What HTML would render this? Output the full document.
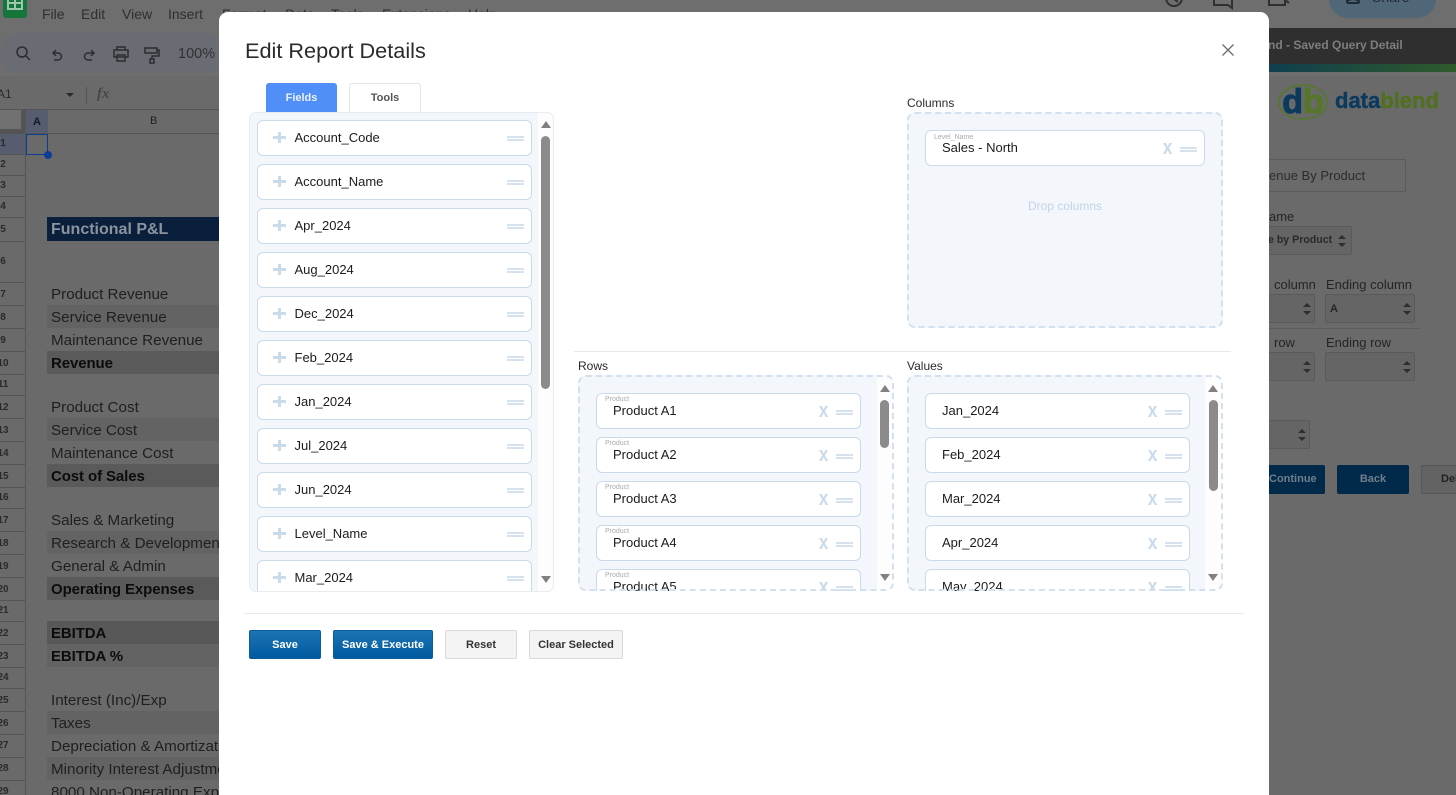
<!DOCTYPE html>
<html lang="en"><head><meta charset="utf-8"><title>Edit Report Details</title>
<style>
html,body{margin:0;padding:0;width:1456px;height:795px;overflow:hidden}
body{background:#6a6a6a;font-family:"Liberation Sans",sans-serif;color:#222}
#w{position:relative;width:1456px;height:795px;overflow:hidden;background:#6a6a6a}
.a{position:absolute;white-space:nowrap}
.m{font-size:14px;color:#2d2f31;top:6px}
.lbl{font-size:15.2px;color:#1f1f1f;left:51px}
.b{font-weight:700;color:#0c0c0c;font-size:15px;letter-spacing:-.1px}
.bar{left:47px;width:172px;background:#5a5a5a}
.rn{left:-9px;width:24px;text-align:center;font-size:10px;color:#2a2a2a;height:14px;line-height:14px;font-weight:700}
.ln{left:0;width:26px;height:1px;background:#555}
.modal{left:219px;top:12px;width:1050px;height:783px;background:#fff;border-radius:9px 9px 0 0}
.box{position:absolute;box-sizing:border-box;background:#f3f7fb;overflow:hidden}
.dash{position:absolute;box-sizing:border-box;border:2px dashed #d3e1ee;border-radius:8px;pointer-events:none}
.it{position:absolute;box-sizing:border-box;height:36px;background:#fff;border:1px solid #c9daea;border-radius:6px}
.t{position:absolute;font-size:13px;line-height:16px;color:#1c1c1c;top:9px;white-space:nowrap}
.f .t{left:36.5px}
.s{position:absolute;left:8px;top:1px;font-size:7px;line-height:9px;color:#aaa}
.v .t{left:16px;top:9px}
.p{position:absolute;left:15px;top:11px;width:13px;height:11px}
.p:before{content:"";position:absolute;left:5px;top:0;width:3px;height:11px;background:#c9daea}
.p:after{content:"";position:absolute;left:0;top:4px;width:13px;height:3px;background:#c9daea}
.g{position:absolute;right:7px;top:15px;width:17px;height:1px;border-top:2px solid #d5e2ee;border-bottom:2px solid #d5e2ee;box-sizing:content-box}
.v .g{top:16px}
.x{position:absolute;right:30.5px;top:8px;font-size:20px;line-height:18px;color:#c9daea;font-weight:700;transform:scaleX(.85)}
.sb{position:absolute;background:#fdfdfe}
.th{position:absolute;background:#8b8b8b;border-radius:5px;width:9px}
.up{position:absolute;width:0;height:0;border-left:5px solid transparent;border-right:5px solid transparent;border-bottom:7px solid #808080}
.dn{position:absolute;width:0;height:0;border-left:5px solid transparent;border-right:5px solid transparent;border-top:7px solid #808080}
.hd{position:absolute;font-size:12px;line-height:14px;color:#2a2a2a}
.btn{position:absolute;box-sizing:border-box;top:630px;height:29px;border-radius:2px;font-size:11px;font-weight:700;text-align:center;line-height:28px}
.bl{background:linear-gradient(#1b74b3,#005a9f);color:#fff;border:1px solid #0a5d9c}
.gr{background:#f4f4f4;color:#333;border:1px solid #d9d9d9}
.dk{position:absolute;font-size:13px;color:#252525;white-space:nowrap}
.sel{position:absolute;box-sizing:border-box;background:#656565;border:1px solid #5a5a5a;border-radius:2px}
.ar{position:absolute;width:0;height:0;border-left:4px solid transparent;border-right:4px solid transparent;border-bottom:4px solid #2e2e2e}
.ar:after{content:"";position:absolute;left:-4px;top:8px;width:0;height:0;border-left:4px solid transparent;border-right:4px solid transparent;border-top:4px solid #2e2e2e}
</style></head><body><div id="w">

<!-- top toolbar -->
<div class="a" style="left:0;top:0;width:1456px;height:76px;background:#6e6e6e"></div>
<div class="a" style="left:3px;top:-6px;width:24px;height:24px;background:#14763a;border-radius:3px"></div>
<svg class="a" style="left:6px;top:-4px" width="18" height="16"><path d="M2 2H16V13H2ZM2 7H16M9 2V13" stroke="#9fc5ad" stroke-width="2" fill="none"/></svg>
<div class="a m" style="left:42px">File</div><div class="a m" style="left:81px">Edit</div><div class="a m" style="left:122px">View</div><div class="a m" style="left:168px">Insert</div><div class="a m" style="left:222px">Format</div><div class="a m" style="left:285px">Data</div><div class="a m" style="left:331px">Tools</div><div class="a m" style="left:382px">Extensions</div><div class="a m" style="left:468px">Help</div>
<div class="a" style="left:0;top:33px;width:225px;height:40px;background:#696c73;border-radius:20px"></div>
<svg class="a" style="left:0;top:30px" width="225" height="50" fill="none" stroke="#2b2d30" stroke-width="1.5">
<circle cx="22" cy="22" r="5"/><path d="M26 26L30 30"/>
<path d="M56 20L53 23L56 26M53 23H58A3.5 3.5 0 0 1 58 30H54"/>
<path d="M91 20L94 23L91 26M94 23H88A3.5 3.5 0 0 0 88 30H92"/>
<path d="M114 27H128V20H114ZM117 20V17H125V20M117 25H125V31H117Z"/>
<path d="M145 18H157V23H145ZM157 20H159V26H152V29M150 29H154V33H150Z"/>
</svg>
<div class="a" style="left:178px;top:46px;font-size:14.5px;color:#303133">100%</div>
<svg class="a" style="left:1160px;top:-10px" width="130" height="30" fill="none" stroke="#2f3033" stroke-width="2"><circle cx="14" cy="8" r="8"/><path d="M14 4V9L18 12"/><path d="M54 2V15H68L72 18V2Z"/><path d="M109 2V15H125V10L129 13M125 15"/></svg>
<div class="a" style="left:1329px;top:-20px;width:107px;height:38px;background:#4f6778;border-radius:19px"></div>
<svg class="a" style="left:1346px;top:-6px" width="16" height="12" fill="none" stroke="#1d2933" stroke-width="2"><path d="M1 9H13M1 9V7Q7 3 13 7V9"/></svg>
<div class="a" style="left:1372px;top:-11px;font-size:14px;color:#1d2933">Share</div>

<!-- formula bar -->
<div class="a" style="left:0;top:76px;width:225px;height:34px;background:#6a6a6a"></div>
<div class="a" style="left:-3px;top:87px;font-size:12px;color:#2a2a2a">A1</div>
<div class="a" style="left:66px;top:93px;border-left:4px solid transparent;border-right:4px solid transparent;border-top:4px solid #2a2a2a"></div>
<div class="a" style="left:86px;top:87px;width:1px;height:17px;background:#555"></div>
<div class="a" style="left:97px;top:86px;font-family:'Liberation Serif',serif;font-style:italic;font-weight:700;font-size:15px;color:#474747">fx</div>
<div class="a" style="left:0;top:109px;width:225px;height:1px;background:#555"></div>

<!-- grid headers -->
<div class="a" style="left:0;top:110px;width:225px;height:24px;background:#6a6a6a"></div>
<div class="a" style="left:0;top:110px;width:21px;height:19px;background:#717171"></div>
<div class="a" style="left:21px;top:110px;width:5px;height:24px;background:#545454"></div>
<div class="a" style="left:0;top:129px;width:26px;height:5px;background:#545454"></div>
<div class="a" style="left:26px;top:110px;width:22px;height:24px;background:#565d6e;text-align:center;line-height:24px;font-size:11px;font-weight:700;color:#111b2c">A</div>
<div class="a" style="left:150px;top:115px;font-size:11px;color:#222">B</div>
<div class="a" style="left:26px;top:133px;width:199px;height:1px;background:#555"></div>
<div class="a" style="left:25px;top:110px;width:1px;height:685px;background:#555"></div>
<div class="a" style="left:0;top:134px;width:25px;height:20px;background:#565d6e"></div>
<div class="a" style="left:26px;top:134px;width:22px;height:21px;box-sizing:border-box;border:1px solid #0c3f94"></div>
<div class="a" style="left:44px;top:151px;width:8px;height:8px;border-radius:50%;background:#0c3f94"></div>

<div class="a rn" style="top:137px">1</div><div class="a ln" style="top:154px"></div>
<div class="a rn" style="top:158px">2</div><div class="a ln" style="top:175px"></div>
<div class="a rn" style="top:179px">3</div><div class="a ln" style="top:196px"></div>
<div class="a rn" style="top:200px">4</div><div class="a ln" style="top:217px"></div>
<div class="a rn" style="top:223px">5</div><div class="a ln" style="top:241px"></div>
<div class="a rn" style="top:255px">6</div><div class="a ln" style="top:282px"></div>
<div class="a rn" style="top:288px">7</div><div class="a ln" style="top:305px"></div>
<div class="a rn" style="top:311px">8</div><div class="a ln" style="top:328px"></div>
<div class="a rn" style="top:334px">9</div><div class="a ln" style="top:351px"></div>
<div class="a rn" style="top:357px">10</div><div class="a ln" style="top:374px"></div>
<div class="a rn" style="top:378px">11</div><div class="a ln" style="top:395px"></div>
<div class="a rn" style="top:401px">12</div><div class="a ln" style="top:418px"></div>
<div class="a rn" style="top:424px">13</div><div class="a ln" style="top:441px"></div>
<div class="a rn" style="top:447px">14</div><div class="a ln" style="top:464px"></div>
<div class="a rn" style="top:470px">15</div><div class="a ln" style="top:487px"></div>
<div class="a rn" style="top:491px">16</div><div class="a ln" style="top:508px"></div>
<div class="a rn" style="top:514px">17</div><div class="a ln" style="top:531px"></div>
<div class="a rn" style="top:537px">18</div><div class="a ln" style="top:554px"></div>
<div class="a rn" style="top:560px">19</div><div class="a ln" style="top:577px"></div>
<div class="a rn" style="top:583px">20</div><div class="a ln" style="top:600px"></div>
<div class="a rn" style="top:604px">21</div><div class="a ln" style="top:621px"></div>
<div class="a rn" style="top:627px">22</div><div class="a ln" style="top:644px"></div>
<div class="a rn" style="top:650px">23</div><div class="a ln" style="top:667px"></div>
<div class="a rn" style="top:671px">24</div><div class="a ln" style="top:688px"></div>
<div class="a rn" style="top:694px">25</div><div class="a ln" style="top:711px"></div>
<div class="a rn" style="top:717px">26</div><div class="a ln" style="top:734px"></div>
<div class="a rn" style="top:739px">27</div><div class="a ln" style="top:757px"></div>
<div class="a rn" style="top:762px">28</div><div class="a ln" style="top:780px"></div>
<div class="a rn" style="top:785px">29</div>

<!-- sheet bands -->
<div class="a" style="left:47px;top:217px;width:172px;height:24px;background:#0a1f3b"></div>
<div class="a" style="left:51px;top:221px;font-size:16px;font-weight:700;color:#8b939d">Functional P&amp;L</div>
<div class="a bar" style="top:305px;height:23px;background:#636363"></div>
<div class="a bar" style="top:351px;height:23px"></div>
<div class="a bar" style="top:418px;height:23px;background:#636363"></div>
<div class="a bar" style="top:464px;height:23px"></div>
<div class="a bar" style="top:531px;height:23px;background:#636363"></div>
<div class="a bar" style="top:577px;height:23px"></div>
<div class="a bar" style="top:621px;height:23px;background:#585858"></div>
<div class="a bar" style="top:644px;height:23px;background:#636363"></div>
<div class="a bar" style="top:711px;height:23px;background:#636363"></div>
<div class="a bar" style="top:757px;height:23px;background:#636363"></div>
<div class="a lbl" style="top:286px">Product Revenue</div>
<div class="a lbl" style="top:309px">Service Revenue</div>
<div class="a lbl" style="top:332px">Maintenance Revenue</div>
<div class="a lbl b" style="top:355px">Revenue</div>
<div class="a lbl" style="top:399px">Product Cost</div>
<div class="a lbl" style="top:422px">Service Cost</div>
<div class="a lbl" style="top:445px">Maintenance Cost</div>
<div class="a lbl b" style="top:468px">Cost of Sales</div>
<div class="a lbl" style="top:512px">Sales &amp; Marketing</div>
<div class="a lbl" style="top:535px">Research &amp; Development</div>
<div class="a lbl" style="top:558px">General &amp; Admin</div>
<div class="a lbl b" style="top:581px">Operating Expenses</div>
<div class="a lbl b" style="top:625px">EBITDA</div>
<div class="a lbl b" style="top:648px">EBITDA %</div>
<div class="a lbl" style="top:692px">Interest (Inc)/Exp</div>
<div class="a lbl" style="top:715px">Taxes</div>
<div class="a lbl" style="top:738px">Depreciation &amp; Amortization</div>
<div class="a lbl" style="top:761px">Minority Interest Adjustment</div>
<div class="a lbl" style="top:784px">8000 Non-Operating Expenses</div>

<!-- right sidebar -->
<div class="a" style="left:1269px;top:28px;width:187px;height:36px;background:#2f2f2f"></div>
<div class="a" style="left:1268px;top:38px;font-size:12px;font-weight:700;color:#7e7e7e">nd - Saved Query Detail</div>
<div class="a" style="left:1269px;top:64px;width:187px;height:8px;background:linear-gradient(90deg,#0f3f4f,#2f5a2a)"></div>
<svg class="a" style="left:1278px;top:84px" width="50" height="36"><ellipse cx="25" cy="18" rx="24" ry="17" fill="none" stroke="#56772a" stroke-width="1.5"/><text x="25" y="29" text-anchor="middle" font-family="Liberation Sans" font-weight="700" font-size="34"><tspan fill="#0b3a5e" stroke="#0b3a5e" stroke-width="1">d</tspan><tspan fill="#56772a" stroke="#56772a" stroke-width="1">b</tspan></text></svg>
<div class="a" style="left:1335px;top:88px;font-size:22px;font-weight:700;color:#0b3a5e;-webkit-text-stroke:.4px #0b3a5e">data<span style="color:#507020;-webkit-text-stroke:.4px #507020">blend</span></div>
<div class="sel" style="left:1240px;top:159px;width:166px;height:33px;background:#6a6a6a"></div>
<div class="dk" style="left:1269px;top:168px;color:#2c2c2c">enue By Product</div>
<div class="dk" style="left:1269px;top:209px">ame</div>
<div class="sel" style="left:1240px;top:226px;width:112px;height:29px"></div>
<div class="dk" style="left:1268px;top:234px;font-size:10.6px;font-weight:700;color:#2a2a2a">e by Product</div>
<div class="ar" style="left:1338px;top:235px"></div>
<div class="dk" style="left:1274px;top:277px">column</div><div class="dk" style="left:1326px;top:277px">Ending column</div>
<div class="sel" style="left:1240px;top:294px;width:75px;height:29px"></div><div class="ar" style="left:1303px;top:303px"></div>
<div class="sel" style="left:1325px;top:294px;width:90px;height:29px"></div><div class="ar" style="left:1403px;top:303px"></div>
<div class="dk" style="left:1330px;top:303px;font-size:11px;font-weight:700">A</div>
<div class="a" style="left:1269px;top:328px;width:151px;height:1px;background:#5c5c5c"></div>
<div class="dk" style="left:1274px;top:335px">row</div><div class="dk" style="left:1326px;top:335px">Ending row</div>
<div class="sel" style="left:1240px;top:352px;width:75px;height:29px"></div><div class="ar" style="left:1303px;top:361px"></div>
<div class="sel" style="left:1325px;top:352px;width:90px;height:29px"></div><div class="ar" style="left:1403px;top:361px"></div>
<div class="sel" style="left:1240px;top:420px;width:70px;height:29px"></div><div class="ar" style="left:1298px;top:429px"></div>
<div class="a" style="left:1240px;top:465px;width:85px;height:29px;background:#00294a;border-radius:2px"></div>
<div class="a" style="left:1269px;top:473px;font-size:11px;font-weight:700;color:#6f7f8c">Continue</div>
<div class="a" style="left:1337px;top:465px;width:72px;height:29px;background:#00294a;border-radius:2px;text-align:center;line-height:29px;font-size:11px;font-weight:700;color:#6f7f8c">Back</div>
<div class="a" style="left:1421px;top:465px;width:50px;height:29px;box-sizing:border-box;background:#636363;border:1px solid #575757;border-radius:2px;font-size:11px;font-weight:700;color:#222;line-height:27px;padding-left:19px">Delete</div>

<!-- modal -->
<div class="a modal"></div>
<div class="a" style="left:245px;top:38px;font-size:21.7px;line-height:26px;color:#2b2b2b">Edit Report Details</div>
<svg class="a" style="left:1221px;top:43px" width="14" height="14"><path d="M1.5 1.5L12.5 12.5M12.5 1.5L1.5 12.5" stroke="#6b6b6b" stroke-width="1.3"/></svg>

<!-- tabs -->
<div class="a" style="left:266px;top:83px;width:71px;height:29px;box-sizing:border-box;background:#4f8ff7;border-radius:3px 3px 0 0;text-align:center;font-size:11px;font-weight:700;line-height:31px;color:#e8f0fe">Fields</div>
<div class="a" style="left:349px;top:83px;width:72px;height:29px;box-sizing:border-box;background:#fff;border:1px solid #e4e4e4;border-bottom:0;border-radius:3px 3px 0 0;text-align:center;font-size:11px;font-weight:700;line-height:29px;color:#555">Tools</div>

<!-- fields -->
<div class="box f" style="left:249px;top:112px;width:305px;height:480px;border:1px solid #e6ecf2;border-radius:7px">
<div class="it" style="left:7px;top:7px;width:275px"><span class="p"></span><span class="t">Account_Code</span><span class="g"></span></div>
<div class="it" style="left:7px;top:51px;width:275px"><span class="p"></span><span class="t">Account_Name</span><span class="g"></span></div>
<div class="it" style="left:7px;top:95px;width:275px"><span class="p"></span><span class="t">Apr_2024</span><span class="g"></span></div>
<div class="it" style="left:7px;top:139px;width:275px"><span class="p"></span><span class="t">Aug_2024</span><span class="g"></span></div>
<div class="it" style="left:7px;top:183px;width:275px"><span class="p"></span><span class="t">Dec_2024</span><span class="g"></span></div>
<div class="it" style="left:7px;top:227px;width:275px"><span class="p"></span><span class="t">Feb_2024</span><span class="g"></span></div>
<div class="it" style="left:7px;top:271px;width:275px"><span class="p"></span><span class="t">Jan_2024</span><span class="g"></span></div>
<div class="it" style="left:7px;top:315px;width:275px"><span class="p"></span><span class="t">Jul_2024</span><span class="g"></span></div>
<div class="it" style="left:7px;top:359px;width:275px"><span class="p"></span><span class="t">Jun_2024</span><span class="g"></span></div>
<div class="it" style="left:7px;top:403px;width:275px"><span class="p"></span><span class="t">Level_Name</span><span class="g"></span></div>
<div class="it" style="left:7px;top:447px;width:275px"><span class="p"></span><span class="t">Mar_2024</span><span class="g"></span></div>
<div class="sb" style="left:288px;top:0;width:16px;height:480px"></div>
<div class="up" style="left:291px;top:8px"></div>
<div class="th" style="left:291px;top:23px;height:253px"></div>
<div class="dn" style="left:291px;top:463px"></div>
</div>

<!-- columns -->
<div class="hd" style="left:907px;top:96px">Columns</div>
<div class="box" style="left:907px;top:112px;width:316px;height:216px;border-radius:8px">
<div class="it v" style="left:18px;top:18px;width:280px"><span class="s" style="top:2px">Level_Name</span><span class="t">Sales - North</span><span class="x">x</span><span class="g"></span></div>
<div style="position:absolute;left:0;width:316px;text-align:center;top:87px;font-size:12px;color:#c2d2e6">Drop columns</div>
</div>
<div class="dash" style="left:907px;top:112px;width:316px;height:216px"></div>

<div class="a" style="left:574px;top:351px;width:657px;height:1px;background:#e9e9e9"></div>

<!-- rows -->
<div class="hd" style="left:578px;top:359px">Rows</div>
<div class="box" style="left:578px;top:375px;width:316px;height:216px;border-radius:8px">
<div class="it v" style="left:18px;top:18px;width:265px"><span class="s">Product</span><span class="t">Product A1</span><span class="x">x</span><span class="g"></span></div>
<div class="it v" style="left:18px;top:62px;width:265px"><span class="s">Product</span><span class="t">Product A2</span><span class="x">x</span><span class="g"></span></div>
<div class="it v" style="left:18px;top:106px;width:265px"><span class="s">Product</span><span class="t">Product A3</span><span class="x">x</span><span class="g"></span></div>
<div class="it v" style="left:18px;top:150px;width:265px"><span class="s">Product</span><span class="t">Product A4</span><span class="x">x</span><span class="g"></span></div>
<div class="it v" style="left:18px;top:194px;width:265px"><span class="s">Product</span><span class="t">Product A5</span><span class="x">x</span><span class="g"></span></div>
<div class="sb" style="left:299px;top:0;width:17px;height:216px"></div>
<div class="up" style="left:302px;top:10px"></div>
<div class="th" style="left:302px;top:25px;height:48px"></div>
<div class="dn" style="left:302px;top:199px"></div>
</div>
<div class="dash" style="left:578px;top:375px;width:316px;height:216px"></div>

<!-- values -->
<div class="hd" style="left:907px;top:359px">Values</div>
<div class="box" style="left:907px;top:375px;width:316px;height:216px;border-radius:8px">
<div class="it v" style="left:18px;top:18px;width:265px"><span class="t">Jan_2024</span><span class="x">x</span><span class="g"></span></div>
<div class="it v" style="left:18px;top:62px;width:265px"><span class="t">Feb_2024</span><span class="x">x</span><span class="g"></span></div>
<div class="it v" style="left:18px;top:106px;width:265px"><span class="t">Mar_2024</span><span class="x">x</span><span class="g"></span></div>
<div class="it v" style="left:18px;top:150px;width:265px"><span class="t">Apr_2024</span><span class="x">x</span><span class="g"></span></div>
<div class="it v" style="left:18px;top:194px;width:265px"><span class="t">May_2024</span><span class="x">x</span><span class="g"></span></div>
<div class="sb" style="left:298px;top:0;width:18px;height:216px"></div>
<div class="up" style="left:301px;top:10px"></div>
<div class="th" style="left:302px;top:25px;height:91px"></div>
<div class="dn" style="left:301px;top:199px"></div>
</div>
<div class="dash" style="left:907px;top:375px;width:316px;height:216px"></div>

<!-- footer -->
<div class="a" style="left:244px;top:613px;width:1000px;height:1px;background:#e9e9e9"></div>
<div class="btn bl" style="left:249px;width:72px">Save</div>
<div class="btn bl" style="left:333px;width:100px">Save &amp; Execute</div>
<div class="btn gr" style="left:445px;width:72px">Reset</div>
<div class="btn gr" style="left:529px;width:94px">Clear Selected</div>
</div></body></html>
